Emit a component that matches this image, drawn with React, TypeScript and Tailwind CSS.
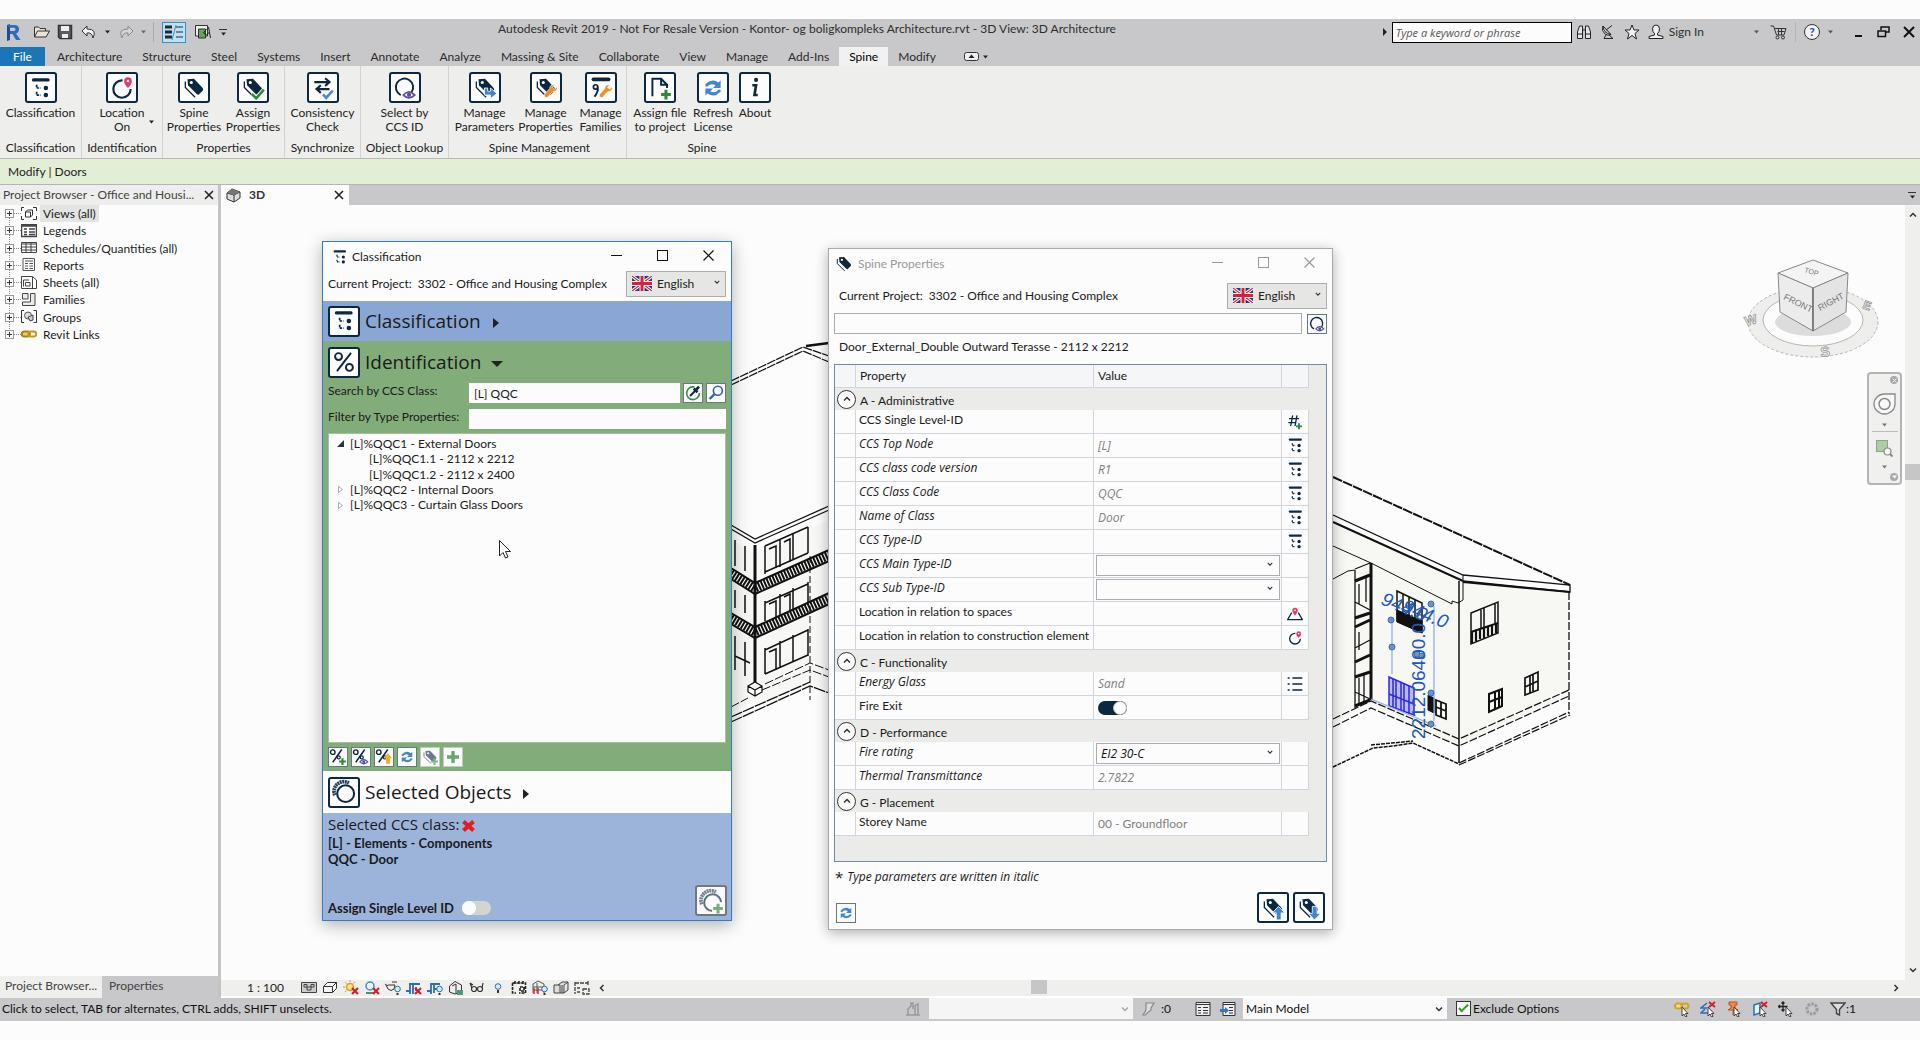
import type { ReactNode } from "react";

const NAVY = "#0c2740";

/* ---------- shared icons ---------- */

function Svg({ w = 16, h = 16, box, children }: { w?: number; h?: number; box?: string; children: ReactNode }) {
  return (
    <svg width={w} height={h} viewBox={box ?? "0 0 16 16"} fill="none" className="block shrink-0" aria-hidden="true">
      {children}
    </svg>
  );
}

function Caret({ color = "#222" }: { color?: string }) {
  return (
    <Svg w={5} h={4} box="0 0 5 4">
      <path d="M0 0.5h5L2.5 3.5z" fill={color} />
    </Svg>
  );
}

function Chevron({ dir, size = 8 }: { dir: "up" | "down" | "left" | "right"; size?: number }) {
  const d = { up: "M1 5.5L4 2.5L7 5.5", down: "M1 2.5L4 5.5L7 2.5", left: "M5.5 1L2.5 4L5.5 7", right: "M2.5 1L5.5 4L2.5 7" }[dir];
  return (
    <Svg w={size} h={size} box="0 0 8 8">
      <path d={d} stroke="#333" strokeWidth="1.5" />
    </Svg>
  );
}

const Tree = () => (
  <>
    <path d="M5 4.500H18.500" stroke={NAVY} strokeWidth="3" strokeLinecap="round" />
    <path d="M8 9V12H11.500M8 15.500V18.500H11.500" stroke={NAVY} strokeWidth="1.600" strokeDasharray="2.200 0.800" />
    <circle cx="16.500" cy="12" r="2.100" fill={NAVY} />
    <circle cx="16.500" cy="18.500" r="2.100" fill={NAVY} />
  </>
);

const Tag = () => (
  <>
    <path d="M6 4L12 3.500L20 12Q21 13.500 20 14.500L16.500 18Q15.500 18.500 14.500 17.500L6.500 9.500Z" fill={NAVY} />
    <path d="M4 6V11.500L13 20.500" stroke={NAVY} strokeWidth="1.200" />
    <circle cx="9.500" cy="7" r="1.400" fill="#fff" />
  </>
);

const Pin = () => (
  <>
    <path d="M17.500 12C14.500 8.500 14 7.500 14 5.500A3.500 3.500 0 0 1 21 5.500C21 7.500 20.500 8.500 17.500 12Z" fill="#e8356d" />
    <circle cx="17.500" cy="5.500" r="1.200" fill="#fff" />
  </>
);

const Eye = () => (
  <>
    <path d="M10.500 18.500Q15.500 12.500 21 18.500Q15.500 23.500 10.500 18.500Z" fill="#fff" stroke="#5a4fa0" strokeWidth="1.600" />
    <circle cx="15.700" cy="18.300" r="2" fill="#5a4fa0" />
  </>
);

const Wrench = () => (
  <path d="M22.500 10.500L20 13L18 11.500L20 9Q15.500 8.500 15.500 12.500L10.500 18Q10 21 13 21L18 15.500Q23 15.500 22.500 10.500Z" fill="#f08a24" stroke="#fcfcfc" strokeWidth="0.700" />
);

const Sync = () => (
  <>
    <path d="M5 8.500Q11 2.500 17 7L19 5V12H12L14.500 9.500Q10 7 7 10.500H5Z" fill="#3f86cc" />
    <path d="M19 15.500Q13 21.500 7 17L5 19V12.500H12L9.500 15Q14 17.500 17 13.500H19Z" fill="#3f86cc" />
  </>
);

const Green = ({ x = 17, y = 17 }: { x?: number; y?: number }) => (
  <path d={`M${x - 4.5} ${y}h9M${x} ${y - 4.5}v9`} stroke="#2f8a3a" strokeWidth="2.800" />
);

const Ring = () => (
  <>
    <path d="M3.500 15A9 9 0 0 1 16.500 3.800" stroke="#2b4256" strokeWidth="3.400" strokeDasharray="1.800 0.500" />
    <circle cx="13.500" cy="13.500" r="7.800" fill="#fcfcfc" stroke={NAVY} strokeWidth="1.900" />
  </>
);

const Percent = ({ small = false }: { small?: boolean }) =>
  small ? (
    <>
      <circle cx="5" cy="5.500" r="3" stroke={NAVY} strokeWidth="1.900" />
      <path d="M17 2L5 19" stroke={NAVY} strokeWidth="2" />
      <circle cx="13" cy="12.500" r="2" stroke={NAVY} strokeWidth="1.600" />
    </>
  ) : (
    <>
      <circle cx="7" cy="7" r="3.200" stroke={NAVY} strokeWidth="1.800" />
      <circle cx="17" cy="17" r="3.200" stroke={NAVY} strokeWidth="1.800" />
      <path d="M18.500 3.500L5.500 20.500" stroke={NAVY} strokeWidth="1.800" />
    </>
  );

const glyphs: Record<string, ReactNode> = {
  tree: <Tree />,
  location: (
    <>
      <path d="M12.500 5A8 8 0 1 0 20 13" stroke={NAVY} strokeWidth="2" />
      <Pin />
    </>
  ),
  tag: <Tag />,
  tagCheck: (
    <>
      <Tag />
      <path d="M11 17.500L15 21.500L22 13.500" stroke="#fff" strokeWidth="4" />
      <path d="M11 17.500L15 21.500L22 13.500" stroke="#2f8a3a" strokeWidth="2.400" />
    </>
  ),
  swap: (
    <>
      <path d="M4 6.500H17M14 3L18 6.500L14 10" stroke={NAVY} strokeWidth="2" />
      <path d="M18 13H6M10 9.500L6 13L10 16.500" stroke={NAVY} strokeWidth="2" />
      <path d="M12 18L15 21L21 14.500" stroke="#4a8ad0" strokeWidth="2.400" />
    </>
  ),
  select: (
    <>
      <path d="M8 18.500A8 8 0 1 1 18 16" stroke={NAVY} strokeWidth="1.800" />
      <Eye />
    </>
  ),
  tagArrow: (
    <>
      <Tag />
      <path d="M11.500 12V18.500H17V22L23 17L17 12V15H14.500V12Z" fill="#3f86cc" stroke="#fff" strokeWidth="0.800" />
    </>
  ),
  tagWrench: (
    <>
      <Tag />
      <Wrench />
    </>
  ),
  family: (
    <>
      <path d="M5 4H19" stroke={NAVY} strokeWidth="3.400" strokeLinecap="round" />
      <circle cx="7" cy="11" r="2" stroke={NAVY} strokeWidth="1.600" />
      <path d="M9 11.500Q9.500 16 6 20" stroke={NAVY} strokeWidth="1.800" />
      <Wrench />
    </>
  ),
  file: (
    <>
      <path d="M5 19.500V3.500H13L18.500 9V12M13 3.500V9H18.500" stroke={NAVY} strokeWidth="1.800" />
      <Green x={17.5} y={18} />
    </>
  ),
  sync: <Sync />,
  info: (
    <>
      <circle cx="13" cy="4.500" r="1.900" fill={NAVY} />
      <path d="M9.500 9.500H13L11.500 18.500H14.500" stroke={NAVY} strokeWidth="2.400" />
    </>
  ),
  percent: <Percent />,
  percentAdd: (
    <>
      <Percent small />
      <Green x={18} y={18} />
    </>
  ),
  percentEye: (
    <>
      <Percent small />
      <Eye />
    </>
  ),
  percentUp: (
    <>
      <Percent small />
      <path d="M17 7L23 13.500H20V21H14.500V13.500H11.500Z" fill="#f0b323" />
    </>
  ),
  tagAdd: (
    <g opacity="0.600">
      <Tag />
      <Green x={18} y={18} />
    </g>
  ),
  plus: <path d="M12 4V20M4 12H20" stroke="#6aa56e" strokeWidth="4.500" />,
  ring: <Ring />,
  ringAdd: (
    <g opacity="0.650">
      <Ring />
      <path d="M13 13H24V24H13Z" fill="#fcfcfc" />
      <Green x={18.5} y={19} />
    </g>
  ),
  dropper: (
    <>
      <path d="M14 4A8.500 8.500 0 1 0 20.500 12" stroke="#3c8a46" strokeWidth="2.200" />
      <path d="M8 16L15 9" stroke={NAVY} strokeWidth="2.500" />
      <path d="M13 6L18 11M15 9L20 3.500" stroke={NAVY} strokeWidth="3.500" />
    </>
  ),
  lens: (
    <>
      <circle cx="14.500" cy="9" r="6" stroke="#3a62a8" strokeWidth="2.200" />
      <path d="M10 13.500L3.500 20" stroke="#3a62a8" strokeWidth="3.200" />
    </>
  ),
  hashAdd: (
    <>
      <path d="M8.500 2L5.500 18M15 2L12 18M3 7H18M2 13H14" stroke={NAVY} strokeWidth="2" />
      <Green x={18} y={18.5} />
    </>
  ),
  spaces: (
    <>
      <path d="M7 10L1 20.500H23L17 10" stroke={NAVY} strokeWidth="1.800" />
      <path d="M12 14.500C9 10.500 8 9 8 6.500A4 4 0 0 1 16 6.500C16 9 15 10.500 12 14.500Z" fill="#e8356d" />
      <circle cx="12" cy="6.500" r="1.400" fill="#fff" />
    </>
  ),
  list: (
    <>
      <path d="M8 3H23M8 12H23M8 21H23" stroke={NAVY} strokeWidth="2.600" />
      <path d="M1 3H4M1 12H4M1 21H4" stroke={NAVY} strokeWidth="2.600" />
    </>
  ),
  tagUp: (
    <>
      <Tag />
      <path d="M17 10.500L23 16.500H19.500V23H15V16.500H11.500Z" fill="#3f86cc" stroke="#fff" strokeWidth="0.800" />
    </>
  ),
  tagDown: (
    <>
      <Tag />
      <path d="M17 23L23 17H19.500V10.500H15V17H11.500Z" fill="#3f86cc" stroke="#fff" strokeWidth="0.800" />
    </>
  ),
};

function Glyph({ name, size }: { name: string; size: number }) {
  return (
    <Svg w={size} h={size} box="0 0 24 24">
      {glyphs[name]}
    </Svg>
  );
}

function Framed({ name, dim = false }: { name: string; dim?: boolean }) {
  return (
    <span
      className={
        "flex h-[31px] w-8 shrink-0 items-center justify-center rounded-[3px] border-2 bg-[#fcfcfc] " +
        (dim ? "border-[#6d7880]" : "border-[#0c2740]")
      }
    >
      <Glyph name={name} size={26} />
    </span>
  );
}

/* ---------- title bar ---------- */

function TitleBar() {
  const btn = "flex h-5 items-center justify-center";
  return (
    <header className="relative flex h-7 items-start bg-[#c8c8ca] pt-0.5 text-[#2e2e2e]">
      <div className="flex h-[22px] items-center">
        <span className="ml-1.5">
          <Svg w={15} h={17} box="0 0 15 17">
            <path d="M1 1L4 0V16L1 17Z" fill="#1b4f91" />
            <path d="M1 1H8.500Q13 1 13 5.200Q13 8.500 10 9.500L14.500 16H10L6.500 10H4V7H8Q9.500 7 9.500 5.200Q9.500 3.800 8 3.800H4Z" fill="#2d6db5" />
          </Svg>
        </span>
        <button aria-label="Open" className={btn + " ml-3"}>
          <Svg w={17}>
            <path d="M1 13V3H5L6.500 4.500H12V7M1 13L4 7H16L12.500 13Z" stroke="#333" fill="#e9e4d4" />
          </Svg>
        </button>
        <button aria-label="Save" className={btn + " ml-[7px]"}>
          <Svg>
            <path d="M1.500 1.500H14.500V14.500H3L1.500 13Z" stroke="#333" strokeWidth="1.500" fill="#5b5b66" />
            <path d="M4 2H12V7H4ZM5 10H11V14H5Z" fill="#eee" />
          </Svg>
        </button>
        <button aria-label="Undo" className={btn + " ml-2"}>
          <Svg>
            <path d="M6 2L1 7L6 12V9Q11 8 12 14Q16.500 5 6 5Z" stroke="#333" fill="#f4f4f4" />
          </Svg>
        </button>
        <span className="ml-2"><Caret /></span>
        <button aria-label="Redo" className={btn + " ml-2"}>
          <Svg>
            <path d="M10 2L15 7L10 12V9Q5 8 4 14Q-0.500 5 10 5Z" stroke="#8a8a8a" fill="#d4d4d4" />
          </Svg>
        </button>
        <span className="ml-[7px]"><Caret color="#666" /></span>
        <span className="ml-[7px] h-5 w-px bg-[#aaaaac]" />
        <button aria-label="Thin lines" className="ml-2 flex h-[21px] w-6 items-center justify-center border border-[#3a8fc8] bg-[#bfe0f2]">
          <Svg w={18} h={15} box="0 0 18 15">
            <path d="M0 2H7M0 7H7M0 12H7" stroke="#1b2a38" strokeWidth="3" />
            <path d="M11 2H18M11 7H18M11 12H18" stroke="#1b2a38" />
            <path d="M11 0L7 15" stroke="#3a8fc8" />
          </Svg>
        </button>
        <button aria-label="Close hidden windows" className={btn + " ml-2"}>
          <Svg w={17}>
            <path d="M1 1.500H13V12H1Z" stroke="#333" fill="#eee" />
            <path d="M4 5H11V14H4Z" fill="#5fa854" stroke="#333" />
            <path d="M12 5L9 9L12 11L15 8M14 3L16 14" stroke="#222" />
          </Svg>
        </button>
        <span className="ml-2 flex flex-col items-center gap-0.5">
          <span className="h-px w-2 bg-[#333]" />
          <Caret />
        </span>
      </div>
      <h1 className="absolute left-[498px] top-[2px] whitespace-nowrap text-[12px] leading-4">
        Autodesk Revit 2019 - Not For Resale Version - Kontor- og boligkompleks Architecture.rvt - 3D View: 3D Architecture
      </h1>
      <div className="ml-auto flex h-[22px] items-center pr-[5px]">
        <Svg w={4} h={8} box="0 0 4 8">
          <path d="M0 0L4 4L0 8Z" fill="#222" />
        </Svg>
        <input
          aria-label="Search help"
          placeholder="Type a keyword or phrase"
          className="ml-[5px] h-[21px] w-[180px] border border-black bg-[#fcfcfc] px-[3px] font-['Open_Sans'] text-[11px] italic outline-none placeholder:text-[#555]"
        />
        <button aria-label="Search" className={btn + " ml-1"}>
          <Svg>
            <path d="M1.500 14.500V8L3.500 2H6.500V14.500ZM9.500 14.500V2H12.500L14.500 8V14.500ZM1.500 10H6.500M9.500 10H14.500M6.500 6H9.500" stroke="#222" fill="#e5e5e5" />
          </Svg>
        </button>
        <button aria-label="Communication centre" className={btn + " ml-2"}>
          <Svg>
            <path d="M3 2Q3 9 11 10.500Q8 12 5 10Q1 7 3 2Z" stroke="#222" fill="#eee" />
            <path d="M3 2L11 10.500M6 6L12 1.500M6 11L4 14.500H13L9 11" stroke="#222" />
          </Svg>
        </button>
        <button aria-label="Favourites" className={btn + " ml-2"}>
          <Svg>
            <path d="M8 1L10 6H15L11 9.500L12.500 15L8 11.500L3.500 15L5 9.500L1 6H6Z" stroke="#222" fill="#f0f0f0" />
          </Svg>
        </button>
        <button className={btn + " ml-2 gap-[5px] text-[12px]"}>
          <Svg>
            <path d="M8 1Q11.500 1 11.500 5Q11.500 8 9.500 9.500V11L15 12.500V14.500H1V12.500L6.500 11V9.500Q4.500 8 4.500 5Q4.500 1 8 1Z" stroke="#222" fill="#eee" />
          </Svg>
          Sign In
        </button>
        <span className="ml-[50px]"><Caret color="#555" /></span>
        <button aria-label="App store" className={btn + " ml-[11px]"}>
          <Svg w={17}>
            <path d="M0 2H3L6 11H13.500L15.500 4.500H4M7 7.500H14M8 5V11M11 5V11" stroke="#333" />
            <circle cx="7" cy="13.500" r="1.500" stroke="#333" />
            <circle cx="12.500" cy="13.500" r="1.500" stroke="#333" />
          </Svg>
        </button>
        <span className="ml-2 h-5 w-px bg-[#b4b4b6]" />
        <button aria-label="Help" className="ml-2 flex h-4 w-4 items-center justify-center rounded-full border border-[#333] bg-[#f2f2f2] text-[12px] font-bold leading-none text-[#1d4d9b]">
          ?
        </button>
        <span className="ml-2"><Caret color="#555" /></span>
        <button aria-label="Minimize" className={btn + " ml-[21px]"}>
          <Svg w={10} h={12} box="0 0 10 12"><path d="M1 10H8" stroke="#111" strokeWidth="2" /></Svg>
        </button>
        <button aria-label="Restore" className={btn + " ml-[13px]"}>
          <Svg w={13} h={12} box="0 0 13 12"><path d="M4 4V1H12V6H9M1 5H8.500V10.500H1Z" stroke="#111" strokeWidth="1.500" /></Svg>
        </button>
        <button aria-label="Close" className={btn + " ml-[13px]"}>
          <Svg w={12} h={12} box="0 0 12 12"><path d="M1 1L11 11M11 1L1 11" stroke="#111" strokeWidth="2" /></Svg>
        </button>
      </div>
    </header>
  );
}

/* ---------- ribbon ---------- */

const tabs = ["Architecture", "Structure", "Steel", "Systems", "Insert", "Annotate", "Analyze", "Massing & Site", "Collaborate", "View", "Manage", "Add-Ins", "Spine", "Modify"];

function RibbonTabs() {
  return (
    <nav className="flex h-[19px] items-stretch bg-[#c8c8ca] text-[12px] leading-[18px]">
      <button className="mr-0.5 w-[45px] bg-[#1b76b8] text-white">File</button>
      {tabs.map((t) => (
        <button key={t} className={"px-2.5 " + (t === "Spine" ? "bg-[#f1f1f1] text-black" : "text-[#2b2b2b]")}>
          {t}
        </button>
      ))}
      <button aria-label="Minimize ribbon" className="ml-[18px] flex items-center gap-1">
        <Svg w={15} h={9} box="0 0 15 9">
          <rect x="0.500" y="0.500" width="14" height="8" rx="2" stroke="#333" fill="#eee" />
          <path d="M4.500 6L7.500 2.500L10.500 6Z" fill="#222" />
        </Svg>
        <Caret />
      </button>
    </nav>
  );
}

type Tool = { icon: string; a: string; b?: string; w: string; caret?: boolean };
const panels: { title: string; w: string; tools: Tool[] }[] = [
  { title: "Classification", w: "w-[82px]", tools: [{ icon: "tree", a: "Classification", w: "w-20" }] },
  { title: "Identification", w: "w-[81px]", tools: [{ icon: "location", a: "Location", b: "On", w: "w-[76px]", caret: true }] },
  { title: "Properties", w: "w-[122px]", tools: [{ icon: "tag", a: "Spine", b: "Properties", w: "w-[59px]" }, { icon: "tagCheck", a: "Assign", b: "Properties", w: "w-[59px]" }] },
  { title: "Synchronize", w: "w-[76px]", tools: [{ icon: "swap", a: "Consistency", b: "Check", w: "w-[72px]" }] },
  { title: "Object Lookup", w: "w-[88px]", tools: [{ icon: "select", a: "Select by", b: "CCS ID", w: "w-20" }] },
  {
    title: "Spine Management",
    w: "w-[178px] pl-1",
    tools: [
      { icon: "tagArrow", a: "Manage", b: "Parameters", w: "w-[62px]" },
      { icon: "tagWrench", a: "Manage", b: "Properties", w: "w-[60px]" },
      { icon: "family", a: "Manage", b: "Families", w: "w-[50px]" },
    ],
  },
  {
    title: "Spine",
    w: "w-[150px]",
    tools: [
      { icon: "file", a: "Assign file", b: "to project", w: "w-[62px]" },
      { icon: "sync", a: "Refresh", b: "License", w: "w-11" },
      { icon: "info", a: "About", w: "w-10" },
    ],
  },
];

function Ribbon() {
  return (
    <div className="flex h-[93px] border-b border-[#b9b9bb] bg-[#eeeeec] text-[12px] leading-[14px] text-[#222]">
      {panels.map((p, i) => (
        <section key={p.title} className={"flex shrink-0 flex-col items-center " + p.w + (i < 6 ? " border-r border-[#d2d2d4]" : "")}>
          <div className="flex h-[75px] justify-center pt-1.5">
            {p.tools.map((t) => (
              <button key={t.icon} className={"relative flex shrink-0 flex-col items-center " + t.w}>
                <Framed name={t.icon} />
                <span className="mt-[3px] whitespace-nowrap">{t.a}</span>
                {t.b && <span className="whitespace-nowrap">{t.b}</span>}
                {t.caret && (
                  <span className="absolute right-1.5 top-[48px]"><Caret /></span>
                )}
              </button>
            ))}
          </div>
          <h2 className="whitespace-nowrap">{p.title}</h2>
        </section>
      ))}
    </div>
  );
}

/* ---------- project browser ---------- */

const browserItems: { name: string; icon: ReactNode }[] = [
  { name: "Views (all)", icon: <path d="M3 0.500H0.500V4M12 0.500H15.500V4M3 12.500H0.500V9M12 12.500H15.500V9M4.500 5L6.500 3H11.500V8L9.500 10H4.500ZM4.500 5H9.500V10" stroke="#333" /> },
  { name: "Legends", icon: <path d="M0.500 0.500H15.500V12.500H0.500ZM1 2H15M3 5H6M3 8H6M3 10.500H6M8 5H14M8 8H14M8 10.500H14" stroke="#444" strokeWidth="1.500" /> },
  { name: "Schedules/Quantities (all)", icon: <path d="M0.500 1.500H15.500V11.500H0.500ZM1 3H15M1 6H15M1 9H15M5 2V12M10 2V12" stroke="#444" /> },
  { name: "Reports", icon: <path d="M2 0.500H13.500V12.500H2ZM4 3H12M4 5.500H7M8.500 5.500H12M4 8H7M8.500 8H12M4 10.500H7M8.500 10.500H12" stroke="#555" /> },
  { name: "Sheets (all)", icon: <path d="M0.500 0.500H11.500L15.500 4V12.500H0.500ZM11.500 1V12M2.500 10.500V4H8M4.500 10V6.500H9V10Z" stroke="#444" /> },
  { name: "Families", icon: <path d="M1.500 0.500H7V6H1.500ZM9.500 0.500H14V12.500H1.500V9H9.500Z" stroke="#444" fill="#ececec" /> },
  { name: "Groups", icon: <><path d="M3 0.500H0.500V12.500H3M12.500 0.500H15.500V12.500H12.500" stroke="#333" /><circle cx="7" cy="5.500" r="3.500" stroke="#555" fill="#ddd" /><path d="M7 7L12 5V10L9 11Z" stroke="#444" fill="#ccc" /></> },
  { name: "Revit Links", icon: <><rect x="0.800" y="4.500" width="8" height="5" rx="2.500" stroke="#b07d10" strokeWidth="2" fill="#f5d35a" /><rect x="7.200" y="4.500" width="8" height="5" rx="2.500" stroke="#c9961c" strokeWidth="2" /></> },
];

function Cross({ size = 9, color = "#222", weight = 1.6 }: { size?: number; color?: string; weight?: number }) {
  return (
    <Svg w={size} h={size} box="0 0 10 10">
      <path d="M1 1L9 9M9 1L1 9" stroke={color} strokeWidth={weight} />
    </Svg>
  );
}

function ProjectBrowser() {
  return (
    <aside className="flex w-[221px] shrink-0 flex-col border-r-[3px] border-[#c4c4c4] bg-[#fcfcfc] text-[12px] text-[#1c1c1c]">
      <div className="flex h-5 items-center justify-between bg-[#eeeeec] pl-[3px] pr-1 text-[#444]">
        <h2 className="whitespace-nowrap">Project Browser - Office and Housi...</h2>
        <button aria-label="Close project browser"><Cross size={10} /></button>
      </div>
      <ul className="flex h-[138px] flex-col">
        {browserItems.map((it, i) => (
          <li key={it.name} className="relative flex flex-1 items-center pl-[5px]">
            {i < 7 && <span className="absolute left-[9px] top-3 h-3 border-l border-dotted border-[#888]" />}
            <button aria-label={"Expand " + it.name} className="flex h-[9px] w-[9px] items-center justify-center border border-[#999] bg-[#fafafa]">
              <Svg w={7} h={7} box="0 0 7 7"><path d="M1 3.500H6M3.500 1V6" stroke="#334" /></Svg>
            </button>
            <span className="w-[7px] border-t border-dotted border-[#888]" />
            <Svg h={14} box="0 0 16 14">{it.icon}</Svg>
            <span className={"ml-[3px] whitespace-nowrap px-[3px] leading-[17px] " + (i === 0 ? "bg-[#e4e4e2]" : "")}>{it.name}</span>
          </li>
        ))}
      </ul>
      <div className="mt-auto flex h-[22px] bg-[#c8c8ca] pb-0.5 text-[#444]">
        <button className="-mb-0.5 w-[102px] whitespace-nowrap bg-[#efefed] pb-0.5 pl-[5px] text-left">Project Browser...</button>
        <button className="pl-[7px] text-left">Properties</button>
      </div>
    </aside>
  );
}

/* ---------- model drawing ---------- */

function Building() {
  return (
    <svg viewBox="221 205 1684 775" preserveAspectRatio="xMinYMin slice" className="absolute inset-0 h-full w-full" fill="none" stroke="#111" aria-label="3D view of the building">
      {/* west wing */}
      <path d="M731 540L755 554V700L731 712ZM755 554L829 520V690L810 684L755 706Z" fill="#f7f7f5" stroke="none" />
      <path d="M731 381L803 347L829 356M731 385L803 351L829 362" strokeWidth="1.200" strokeDasharray="9 1" />
      <path d="M806 346L829 343" strokeWidth="2.500" />
      <path d="M731 525L755 539L829 506M731 529L755 543L829 510" strokeWidth="1.300" />
      <path d="M755 545V686" strokeWidth="3" />
      <path d="M731 573L755 588L829 555" strokeWidth="9" strokeDasharray="2 1.200" />
      <path d="M731 568L755 583L829 550M731 579L755 594L829 561" strokeWidth="2" />
      <path d="M731 618L755 632L829 598" strokeWidth="9" strokeDasharray="2 1.200" />
      <path d="M731 613L755 627L829 593M731 624L755 638L829 604" strokeWidth="2" />
      <path d="M765 546V574M780 540V567M793 534V560M808 527V553M765 546L808 527M765 572L808 553M769 549L776 546V568M784 542L790 539V562" strokeWidth="1.500" />
      <path d="M765 601V621M780 594V615M793 588V609M808 582V602M765 603L808 584M769 604L776 601V617M784 597L790 594V611" strokeWidth="1.500" />
      <path d="M765 648V674M780 641V668M793 635V662M808 629V656M765 650L808 630M765 674L808 655M769 652L776 649V670" strokeWidth="1.500" />
      <path d="M735 540V566M745 546V571M735 590V608M745 595V613M735 636V670M745 642V676M735 656L750 663" strokeWidth="1.500" />
      <path d="M810 556V700" strokeDasharray="7 3" />
      <path d="M748 686L755 682L762 686V692L755 696L748 692ZM748 686L755 690L762 686M755 690V696" strokeWidth="1.200" fill="#fff" />
      <path d="M765 684L810 663L829 670M731 707L748 698M762 690L810 670L829 677" strokeDasharray="9 2" />
      <path d="M731 722L810 686L829 693M731 717L810 682" strokeWidth="1.300" strokeDasharray="12 1" />

      <g transform="translate(-4 -2)">
        {/* east wing */}
        <path d="M1337 526L1463 583V748L1375 706L1337 724ZM1463 583L1573 594V697L1463 748Z" fill="#f7f7f4" stroke="none" />
        <path d="M1337 479L1574 587" strokeWidth="2" strokeDasharray="10 1" />
        <path d="M1337 517L1467 577L1574 587V594L1467 583" strokeWidth="1.300" />
        <path d="M1337 524L1467 583M1467 584L1574 594" strokeWidth="2" />
        <path d="M1337 548L1375 565L1456 606V603L1462 605L1467 602V577" />
        <path d="M1337 581L1352 573L1359 572" />
        <path d="M1463 583V765" strokeWidth="1.500" />
        <path d="M1573 594V716" strokeDasharray="8 2" strokeWidth="1.300" />
        <path d="M1337 721L1375 703L1463 741L1573 692M1337 729L1375 710L1463 748L1573 698M1463 765L1573 714M1463 767L1574 717" strokeDasharray="8 2" strokeWidth="1.200" />
        <path d="M1337 769L1377 750L1397 748L1417 745L1463 766M1375 747L1417 743" strokeDasharray="4 1" strokeWidth="1.500" />
        <path d="M1375 565V702" strokeWidth="3" />
        <path d="M1359 572V710M1359 571L1374 565M1363 586V606M1370 580V604M1359 604L1374 612M1363 634V652M1359 650L1374 642M1363 680V707M1368 677V704M1359 694L1374 701" strokeWidth="1.300" />
        <path d="M1359 583L1374 577M1359 620L1374 615M1359 629L1374 622M1359 664L1374 657M1359 679L1374 674M1359 708L1374 702" strokeWidth="3" />
        <path d="M1401 593L1426 605V634L1401 623ZM1407 596V614M1413 599V618M1419 602V620" strokeWidth="1.500" />
        <path d="M1401 612L1426 623V635L1401 624Z" fill="#111" />
        <path d="M1475 615L1502 604V635L1475 646ZM1485 612V630M1488 610V630M1499 606V625" strokeWidth="1.500" />
        <path d="M1475 634L1502 625M1476 634V645M1480 632V643M1484 631V641M1488 629V640M1492 628V638M1496 626V637M1500 625V635" strokeWidth="2.200" />
        <path d="M1493 696L1506 691V708L1493 714ZM1499 694V711M1503 693V709M1493 704L1506 699" strokeWidth="2" />
        <path d="M1529 680L1542 674V692L1529 697ZM1534 678V695M1537 677V693M1529 689L1542 683" strokeWidth="1.700" />
        <path d="M1432 697L1438 700V715L1432 712Z" fill="#111" />
        <path d="M1440 702L1450 706V721L1440 717ZM1445 704V719M1440 709L1450 713" strokeWidth="1.800" />

        {/* selected door and its dimensions */}
        <path d="M1393 679L1418 690V717L1393 708Z" fill="#b9b9f4" stroke="#2a2ae0" strokeWidth="1.500" />
        <path d="M1397 681V709M1400 682V710M1405 684V712M1408 686V714M1413 688V716M1393 696L1418 706" stroke="#2a2ae0" strokeWidth="1.500" />
        <path d="M1396 622V676M1438 608V723M1375 701L1440 728" stroke="#8fa9e6" strokeWidth="1.200" />
        <g fill="#6d93cc" stroke="#4469a8">
          <circle cx="1435" cy="606" r="3" />
          <circle cx="1395" cy="622" r="3" />
          <circle cx="1396" cy="649" r="3" />
          <circle cx="1421" cy="656" r="3" />
          <circle cx="1426" cy="658" r="3" />
          <circle cx="1435" cy="695" r="3" />
          <circle cx="1435" cy="726" r="3" />
        </g>
        <g fill="#2158b4" stroke="none" fontFamily="'Liberation Sans', Arial, sans-serif" fontSize="19">
          <text transform="translate(1384 606) rotate(22)" fontStyle="italic">944.0</text>
          <text transform="translate(1405 613) rotate(22)" fontStyle="italic">944.0</text>
          <text transform="translate(1429 741) rotate(-90)">2212.0</text>
          <text transform="translate(1429 683) rotate(-90)">6400.0</text>
        </g>
      </g>
    </svg>
  );
}

function ViewCube() {
  return (
    <svg width="138" height="104" viewBox="1741 256 138 104" fill="none" className="absolute right-[26px] top-[51px]" aria-label="View cube">
      <ellipse cx="1813" cy="322" rx="65" ry="35" fill="#eeeeec" stroke="#b5b5b5" strokeDasharray="3 2" />
      <ellipse cx="1813" cy="320" rx="50" ry="26" fill="#fcfcfc" stroke="#b5b5b5" />
      <ellipse cx="1813" cy="322" rx="38" ry="14" fill="#dcdcdc" />
      <path d="M1778 273L1813 260L1848 273L1813 288Z" fill="#f4f4f4" stroke="#888" />
      <path d="M1778 273L1813 288V331L1780 312Z" fill="#ececec" stroke="#888" />
      <path d="M1848 273L1813 288V331L1846 312Z" fill="#e4e4e4" stroke="#888" />
      <path d="M1813 288V331" stroke="#555" />
      <g fill="#777" fontFamily="'Liberation Sans', Arial, sans-serif">
        <text transform="translate(1783 299) rotate(26)" fontSize="9">FRONT</text>
        <text transform="translate(1820 311) rotate(-28)" fontSize="9">RIGHT</text>
        <text transform="translate(1804 272) rotate(16)" fontSize="7">TOP</text>
      </g>
      <g fill="#f4f4f4" stroke="#999" strokeWidth="0.800" fontFamily="'Liberation Sans', Arial, sans-serif" fontWeight="bold">
        <text transform="translate(1746 326) rotate(-15)" fontSize="13">W</text>
        <text transform="translate(1862 308) rotate(20)" fontSize="12">E</text>
        <text transform="translate(1821 357) rotate(-6)" fontSize="14">S</text>
      </g>
    </svg>
  );
}

function NavigationBar() {
  return (
    <div className="absolute right-[3px] top-[167px] flex h-[113px] w-[35px] flex-col items-center rounded-[4px] border-2 border-[#b4b4b6] bg-[#f0f0ee]">
      <button aria-label="Close navigation bar" className="mt-0.5 mr-0.5 flex h-2 w-2 items-center justify-center self-end rounded-full bg-[#a8a8aa]">
        <Cross size={5} color="#fff" />
      </button>
      <button aria-label="Steering wheel" className="mt-[9px]">
        <Svg w={23} h={22} box="0 0 23 22">
          <path d="M11.500 1H22V11A10.500 10 0 1 1 11.500 1Z" fill="#f8f8f8" stroke="#8a8a8c" strokeWidth="1.300" />
          <circle cx="11.500" cy="11" r="5.500" stroke="#8a8a8c" strokeWidth="1.500" />
        </Svg>
      </button>
      <span className="mt-2"><Caret color="#777" /></span>
      <span className="mt-1 h-px w-[26px] bg-[#bbb]" />
      <button aria-label="Zoom region" className="mt-2">
        <Svg w={17} h={17} box="0 0 17 17">
          <rect x="0.500" y="0.500" width="11" height="11" fill="#a9cfa0" stroke="#8aa486" />
          <circle cx="11.500" cy="11.500" r="3.500" fill="#f6f6f6" stroke="#888" strokeWidth="1.200" />
          <path d="M14 14L16.500 16.500" stroke="#888" strokeWidth="2" />
        </Svg>
      </button>
      <span className="mt-2"><Caret color="#777" /></span>
      <button aria-label="Navigation options" className="mr-0.5 mt-auto mb-0.5 flex h-2 w-2 items-center justify-center self-end rounded-full bg-[#a8a8aa]">
        <Caret color="#fff" />
      </button>
    </div>
  );
}

/* ---------- dialog parts ---------- */

function WindowControls({ color }: { color: string }) {
  const cls = "flex h-[27px] w-[46px] items-center justify-center";
  return (
    <div className="ml-auto flex self-start">
      <button aria-label="Minimize" className={cls}><Svg w={11} h={11} box="0 0 11 11"><path d="M0 5.500H11" stroke={color} /></Svg></button>
      <button aria-label="Maximize" className={cls}><Svg w={11} h={11} box="0 0 11 11"><rect x="0.500" y="0.500" width="10" height="10" stroke={color} /></Svg></button>
      <button aria-label="Close" className={cls}><Svg w={11} h={11} box="0 0 11 11"><path d="M0.500 0.500L10.500 10.500M10.500 0.500L0.500 10.500" stroke={color} strokeWidth="1.200" /></Svg></button>
    </div>
  );
}

function LanguageSelect({ id }: { id: string }) {
  return (
    <div className="relative h-[26px] w-[100px] shrink-0">
      <select id={id} aria-label="Language" className="h-full w-full appearance-none border border-[#adadad] bg-[#e6e6e4] pl-[30px] text-[12px] text-[#222] outline-none">
        <option>English</option>
      </select>
      <span className="pointer-events-none absolute left-1.5 top-[5px]">
        <Svg w={20} h={15} box="0 0 20 15">
          <rect width="20" height="15" fill="#24387c" />
          <path d="M0 0L20 15M20 0L0 15" stroke="#fff" strokeWidth="3.200" />
          <path d="M0 0L20 15M20 0L0 15" stroke="#d8203a" strokeWidth="1.200" />
          <path d="M10 0V15M0 7.500H20" stroke="#fff" strokeWidth="5" />
          <path d="M10 0V15M0 7.500H20" stroke="#d8203a" strokeWidth="3" />
        </Svg>
      </span>
      <span className="pointer-events-none absolute right-1.5 top-2"><Chevron dir="down" size={6} /></span>
    </div>
  );
}

function ToolButton({ icon, label, dim = false }: { icon: string; label: string; dim?: boolean }) {
  return (
    <button aria-label={label} className={"flex h-5 w-5 shrink-0 items-center justify-center border bg-[#fafafa] " + (dim ? "border-[#c2ccc0]" : "border-[#667a7e]")}>
      <Glyph name={icon} size={18} />
    </button>
  );
}

/* ---------- classification dialog ---------- */

function TreeRow({ text, level, open }: { text: string; level: number; open?: boolean }) {
  return (
    <li className={"flex flex-1 items-center whitespace-nowrap " + (level === 1 ? "pl-10" : "pl-2")}>
      {level === 0 && (
        <span className="w-[13px]">
          <Svg w={7} h={7} box="0 0 7 7">
            {open ? <path d="M7 0V7H0Z" fill="#333" /> : <path d="M1.500 0.500L5.500 3.500L1.500 6.500Z" stroke="#999" strokeWidth="0.800" />}
          </Svg>
        </span>
      )}
      {text}
    </li>
  );
}

const heading = "font-['Open_Sans'] text-[19px] leading-6";

function ClassificationDialog() {
  return (
    <section aria-label="Classification" className="absolute left-[101px] top-[36px] flex w-[410px] flex-col border border-[#2f7fc6] bg-[#fcfcfc] text-[12px] text-[#1a1a1a] shadow-[0_4px_16px_rgba(0,0,0,0.3)]">
      <div className="flex h-[29px] items-center pl-2">
        <Glyph name="tree" size={18} />
        <h2 className="ml-[3px]">Classification</h2>
        <WindowControls color="#111" />
      </div>
      <div className="flex h-[30px] items-center justify-between px-[5px] pb-1">
        <span className="whitespace-nowrap">Current Project:&nbsp; 3302 - Office and Housing Complex</span>
        <LanguageSelect id="lang-classification" />
      </div>

      <button className="flex h-10 items-center bg-[#8aa6d5] px-[5px]">
        <Framed name="tree" />
        <span className={"ml-[5px] " + heading}>Classification</span>
        <span className="ml-3 mt-1"><Svg w={6} h={10} box="0 0 6 10"><path d="M0 0L6 5L0 10Z" fill="#222" /></Svg></span>
      </button>

      <div className="bg-[#83ac7b] px-[5px]">
        <button className="flex h-[42px] items-center">
          <Framed name="percent" />
          <span className={"ml-[5px] " + heading}>Identification</span>
          <span className="ml-2.5 mt-1"><Svg w={12} h={6} box="0 0 12 6"><path d="M0 0H12L6 6Z" fill="#222" /></Svg></span>
        </button>
        <div className="flex h-5 items-center gap-[3px]">
          <label htmlFor="ccs-class" className="w-[138px] pb-[5px]">Search by CCS Class:</label>
          <input id="ccs-class" defaultValue="[L] QQC" className="h-5 min-w-0 flex-1 bg-[#fcfcfc] px-[5px] outline-none" />
          <ToolButton icon="dropper" label="Pick class" />
          <ToolButton icon="lens" label="Search class" />
        </div>
        <div className="mt-1.5 flex h-5 items-center gap-[3px]">
          <label htmlFor="type-filter" className="w-[138px] whitespace-nowrap pb-[5px]">Filter by Type Properties:</label>
          <input id="type-filter" className="h-5 min-w-0 flex-1 bg-[#fcfcfc] px-[5px] outline-none" />
        </div>
        <div className="mt-1 h-[310px] border border-[#a7c2a1] bg-[#fcfcfc] pt-0.5 leading-[14px]">
          <ul className="flex h-[77px] flex-col">
            <TreeRow level={0} open text="[L]%QQC1 - External Doors" />
            <TreeRow level={1} text="[L]%QQC1.1 - 2112 x 2212" />
            <TreeRow level={1} text="[L]%QQC1.2 - 2112 x 2400" />
            <TreeRow level={0} text="[L]%QQC2 - Internal Doors" />
            <TreeRow level={0} text="[L]%QQC3 - Curtain Glass Doors" />
          </ul>
        </div>
        <div className="flex h-[28px] items-center gap-[3px]">
          <ToolButton icon="percentAdd" label="Add ID" />
          <ToolButton icon="percentEye" label="Show ID" />
          <ToolButton icon="percentUp" label="Update ID" />
          <ToolButton icon="sync" label="Refresh" />
          <ToolButton icon="tagAdd" label="Add tag" dim />
          <ToolButton icon="plus" label="Add" dim />
        </div>
      </div>

      <button className="flex h-[42px] items-center px-[5px]">
        <Framed name="ring" />
        <span className={"ml-[5px] " + heading}>Selected Objects</span>
        <span className="ml-3 mt-1"><Svg w={6} h={10} box="0 0 6 10"><path d="M0 0L6 5L0 10Z" fill="#222" /></Svg></span>
      </button>

      <div className="flex h-[107px] flex-col bg-[#9db4da] pl-[5px] pr-1">
        <p className="flex h-[22px] items-center gap-[3px] font-['Open_Sans'] text-[15px]">
          Selected CCS class:
          <button aria-label="Clear class" className="mt-1">
            <Svg w={13} h={12} box="0 0 13 12"><path d="M1.500 1.500L11.500 10.500M11.500 1.500L1.500 10.500" stroke="#e02020" strokeWidth="4" /></Svg>
          </button>
        </p>
        <p className="text-[13px] font-bold leading-4">[L] - Elements - Components</p>
        <p className="text-[13px] font-bold leading-4">QQC - Door</p>
        <div className="mb-1 mt-auto flex items-end">
          <label htmlFor="single-level" className="text-[13px] font-bold leading-4">Assign Single Level ID</label>
          <input id="single-level" type="checkbox" role="switch" className="mb-px ml-2 h-[14px] w-[29px] appearance-none rounded-full bg-[#d4d4d2] before:block before:h-[14px] before:w-[14px] before:rounded-full before:bg-[#fcfcfc] before:content-['']" />
          <button aria-label="Assign to object" className="ml-auto"><Framed name="ringAdd" dim /></button>
        </div>
      </div>
    </section>
  );
}

/* ---------- spine properties dialog ---------- */

type Row = { name: string; italic?: boolean; value?: string; icon?: string; control?: "select" | "switch" };
const groups: { title: string; rows: Row[] }[] = [
  {
    title: "A - Administrative",
    rows: [
      { name: "CCS Single Level-ID", icon: "hashAdd" },
      { name: "CCS Top Node", italic: true, value: "[L]", icon: "tree" },
      { name: "CCS class code version", italic: true, value: "R1", icon: "tree" },
      { name: "CCS Class Code", italic: true, value: "QQC", icon: "tree" },
      { name: "Name of Class", italic: true, value: "Door", icon: "tree" },
      { name: "CCS Type-ID", italic: true, icon: "tree" },
      { name: "CCS Main Type-ID", italic: true, control: "select", value: "" },
      { name: "CCS Sub Type-ID", italic: true, control: "select", value: "" },
      { name: "Location in relation to spaces", icon: "spaces" },
      { name: "Location in relation to construction element", icon: "location" },
    ],
  },
  {
    title: "C - Functionality",
    rows: [
      { name: "Energy Glass", italic: true, value: "Sand", icon: "list" },
      { name: "Fire Exit", control: "switch" },
    ],
  },
  {
    title: "D - Performance",
    rows: [
      { name: "Fire rating", italic: true, control: "select", value: "EI2 30-C" },
      { name: "Thermal Transmittance", italic: true, value: "2.7822" },
    ],
  },
  { title: "G - Placement", rows: [{ name: "Storey Name", value: "00 - Groundfloor" }] },
];

const italicText = "font-['Open_Sans'] italic";

function ValueCell({ row }: { row: Row }) {
  if (row.control === "select")
    return (
      <span className="relative block">
        <select aria-label={row.name} className="mx-0.5 block h-[21px] w-[184px] appearance-none border border-[#abadb3] bg-[#fcfcfc] px-1 font-['Open_Sans'] text-[12px] italic text-[#111] outline-none">
          <option>{row.value}</option>
        </select>
        <span className="pointer-events-none absolute right-2 top-1.5"><Chevron dir="down" size={6} /></span>
      </span>
    );
  if (row.control === "switch")
    return (
      <input
        type="checkbox"
        role="switch"
        defaultChecked
        aria-label={row.name}
        className="ml-1 flex h-[14px] w-[29px] appearance-none justify-end rounded-full bg-[#0c2740] before:block before:h-[14px] before:w-[14px] before:rounded-full before:border before:border-[#b8b8b8] before:bg-[#fcfcfc] before:content-['']"
      />
    );
  return <span className={"block pl-1 leading-[21px] text-[#808080] " + (row.italic ? italicText : "")}>{row.value}</span>;
}

function PropertyTable() {
  const cell = "border-b border-r border-[#d4d4dc] p-0";
  return (
    <div className="mx-[5px] flex h-[498px] border border-[#7189a5] bg-[#ebebe9]">
      <table className="w-[474px] table-fixed border-separate border-spacing-0 self-start text-left">
        <colgroup>
          <col className="w-[21px]" />
          <col className="w-[238px]" />
          <col className="w-[188px]" />
          <col className="w-[27px]" />
        </colgroup>
        <thead>
          <tr className="h-[23px] bg-[#f5f6f7]">
            <th className={cell} />
            <th className={cell + " pl-[4px] font-normal"}>Property</th>
            <th className={cell + " pl-[4px] font-normal"}>Value</th>
            <th className={cell} />
          </tr>
        </thead>
        {groups.map((g) => (
          <tbody key={g.title}>
            <tr className="h-[22px]">
              <th colSpan={4} className="h-[22px] p-0 font-normal">
                <span className="flex items-center pl-0.5">
                  <button aria-label={"Collapse " + g.title} className="flex h-[19px] w-[19px] items-center justify-center rounded-full border border-[#333] bg-[#fcfcfc]">
                    <Chevron dir="up" />
                  </button>
                  <span className="ml-1 pt-[3px]">{g.title}</span>
                </span>
              </th>
            </tr>
            {g.rows.map((r) => (
              <tr key={r.name} className="h-6 bg-[#fcfcfc]">
                <td className={cell + " h-6"} />
                <td className={cell + " whitespace-nowrap pl-[3px] align-top leading-[19px] " + (r.italic ? italicText : "")}>{r.name}</td>
                <td className={cell + " align-middle"}><ValueCell row={r} /></td>
                <td className={cell}>
                  {r.icon && (
                    <button aria-label={"Edit " + r.name} className="mx-auto block"><Glyph name={r.icon} size={r.icon === "tree" ? 19 : 16} /></button>
                  )}
                </td>
              </tr>
            ))}
          </tbody>
        ))}
      </table>
    </div>
  );
}

function PropertiesDialog() {
  return (
    <section aria-label="Spine Properties" className="absolute left-[607px] top-[43px] flex h-[682px] w-[505px] flex-col border border-[#a8a8b4] bg-[#fcfcfc] text-[12px] text-[#1a1a1a] shadow-[0_3px_12px_rgba(0,0,0,0.3)]">
      <div className="flex h-[29px] items-center pl-[5px] text-[#999]">
        <Glyph name="tag" size={20} />
        <h2 className="ml-1">Spine Properties</h2>
        <WindowControls color="#999" />
      </div>
      <div className="mt-[5px] flex h-[26px] items-center justify-between pl-2.5 pr-[5px]">
        <span className="whitespace-nowrap">Current Project:&nbsp; 3302 - Office and Housing Complex</span>
        <LanguageSelect id="lang-spine" />
      </div>
      <div className="mt-1 flex items-center gap-[5px] px-[5px]">
        <input aria-label="Filter properties" className="h-[21px] min-w-0 flex-1 border border-[#abadb3] bg-[#fcfcfc] px-1 outline-none" />
        <ToolButton icon="select" label="Find object" />
      </div>
      <p className="h-[30px] pl-2.5 leading-[26px]">Door_External_Double Outward Terasse - 2112 x 2212</p>
      <PropertyTable />
      <p className="mt-[7px] flex items-center gap-1 pl-1.5 leading-4">
        <span className="font-['Open_Sans'] text-[15px]">*</span>
        <em className="font-['Open_Sans']">Type parameters are written in italic</em>
      </p>
      <div className="mt-auto mb-1.5 flex items-end pl-[7px] pr-[7px]">
        <ToolButton icon="sync" label="Refresh properties" />
        <div className="ml-auto flex gap-1">
          <button aria-label="Write properties"><Framed name="tagUp" /></button>
          <button aria-label="Read properties"><Framed name="tagDown" /></button>
        </div>
      </div>
    </section>
  );
}

/* ---------- view area ---------- */

const RedX = () => <path d="M9 8L15 14M15 8L9 14" stroke="#d0202a" strokeWidth="2.200" />;
const Bulb = () => <><circle cx="12.500" cy="9" r="2.800" fill="#d8ecf8" stroke="#2d6db5" /><path d="M11.500 13H13.500V15H11.500Z" fill="#333" /></>;
const viewTools: [string, ReactNode][] = [
  ["Detail level", <path key="a" d="M0.500 2.500H15.500V12.500H0.500ZM3 4.500H6V7H3ZM10 4.500H13V7H10ZM6 7H10V10H6Z" stroke="#444" fill="#ccc" />],
  ["Visual style", <path key="a" d="M1.500 6.500L5.500 2.500H14.500V8.500L10.500 12.500H1.500ZM1.500 6.500H10.500V12.500M10.500 6.500L14.500 2.500" stroke="#333" fill="#f4f4f4" />],
  ["Sun path", <><circle key="a" cx="7" cy="7" r="3.500" fill="#fbe38a" stroke="#e09a20" strokeWidth="1.500" /><path d="M7 0V2M0 7H2M2 2L3.500 3.500M12 2L10.500 3.500M2 12L3.500 10.500" stroke="#e09a20" /><RedX /></>],
  ["Shadows", <><circle key="a" cx="6" cy="6" r="4" fill="#eef5fb" stroke="#3c8fc0" strokeWidth="1.500" /><path d="M2 13H10" stroke="#777" strokeWidth="2" /><RedX /></>],
  ["Rendering", <><path key="a" d="M1 5L3 9Q6 12 9 9L10 5H3M0 4L3 6M7 2H12" stroke="#333" /><Bulb /></>],
  ["Crop view", <><path key="a" d="M4 14V4H14M0 11H4M7 4V14M10 7V11" stroke="#2d6db5" strokeWidth="1.800" /><RedX /></>],
  ["Crop region", <><path key="a" d="M4 14V4H13M0 11H4M7 4V13M7 9H10" stroke="#2d6db5" strokeWidth="1.800" /><Bulb /></>],
  ["Lock view", <><path key="a" d="M1.500 6L7 1.500L13.500 5V12L7 14L1.500 12ZM4 6L8 4V13" stroke="#333" fill="#eee" /><path d="M9 10H15V15H9Z" fill="#4b9a80" /></>],
  ["Temporary hide", <><path key="a" d="M1 3L3 8M1 3L4 5M14 3L13 8" stroke="#333" strokeWidth="1.200" /><circle cx="5" cy="9" r="2.500" stroke="#333" strokeWidth="1.200" /><circle cx="11" cy="9" r="2.500" stroke="#333" strokeWidth="1.200" /></>],
  ["Reveal hidden", <><circle key="a" cx="8" cy="6.500" r="2.800" fill="#d8ecf8" stroke="#2d6db5" /><path d="M7 10H9V13H7Z" fill="#333" /></>],
  ["View properties", <path key="a" d="M1.500 3H14.500V13H8M1.500 3V13H5M4 1V4M8 1V4M12 1V4M9 7H13V11H9Z" stroke="#222" strokeWidth="1.600" strokeDasharray="3 1" />],
  ["Analytical model", <><path key="a" d="M1 13V4L6 1L12 4V13M1 7H12M1 10H12M5 3V13" stroke="#555" /><path d="M2 14V8M6 14V8" stroke="#c33" strokeWidth="1.500" /><Bulb /></>],
  ["Displacement sets", <path key="a" d="M1 5H7V13H1ZM5 5L9 2H15V10L11 13H7M9 5V13M15 2L11 5V13" stroke="#444" fill="#ddd" />],
  ["Constraints", <path key="a" d="M1 2V14M1 3H14M14 1V5M9 9H15V14H9ZM3 8H6M3 12H6" stroke="#444" strokeDasharray="4 1" strokeWidth="1.300" />],
];

function ViewArea() {
  return (
    <main className="flex min-w-0 flex-1 flex-col">
      <div className="flex h-5 items-stretch bg-[#c8c8ca]">
        <div className="flex w-32 items-center bg-[#fcfcfc] pl-[5px] pr-[5px] text-[12px] font-bold text-[#333]">
          <Svg w={15} h={15} box="0 0 15 15">
            <path d="M1 5L6 1L14 4V10L8 14L1 11ZM1 5L8 7L14 4M8 7V14" stroke="#333" fill="#ddd" />
            <path d="M1 5L6 1L14 4L8 7Z" fill="#777" />
          </Svg>
          <span className="ml-2">3D</span>
          <button aria-label="Close view" className="ml-auto"><Cross size={10} /></button>
        </div>
        <button aria-label="View list" className="ml-auto mr-1 flex flex-col items-center justify-center gap-0.5">
          <span className="h-px w-2 bg-[#333]" />
          <Caret />
        </button>
      </div>
      <div className="flex min-h-0 flex-1">
        <div className="relative min-w-0 flex-1 overflow-hidden bg-[#fcfcfc]">
          <Building />
          <ViewCube />
          <NavigationBar />
          <PropertiesDialog />
          <ClassificationDialog />
          <svg width="12" height="19" viewBox="0 0 12 19" className="absolute left-[278px] top-[335px]" aria-hidden="true">
            <path d="M0.500 0.500V16L4 12.500L6.500 18L9 17L6.500 11.500H11.500Z" fill="#fff" stroke="#222" />
          </svg>
        </div>
        <div className="relative flex w-[15px] flex-col items-center justify-between bg-[#efefed] py-1.5">
          <Chevron dir="up" />
          <span className="absolute left-0 top-[259px] h-4 w-[15px] bg-[#c6c6c6]" />
          <Chevron dir="down" />
        </div>
      </div>
      <div className="flex h-[18px] items-center border-b-2 border-white bg-[#efefed] text-[12px] text-[#222]">
        <span className="w-20 whitespace-nowrap pl-[26px]">1 : 100</span>
        <div className="flex gap-[5px]">
          {viewTools.map(([label, icon]) => (
            <button key={label} aria-label={label}><Svg>{icon}</Svg></button>
          ))}
        </div>
        <span className="ml-2"><Chevron dir="left" /></span>
        <div className="relative ml-2 flex h-full flex-1 items-center justify-end pr-5">
          <span className="absolute left-[417px] top-0 h-[14px] w-4 bg-[#c6c6c6]" />
          <Chevron dir="right" />
        </div>
      </div>
    </main>
  );
}

/* ---------- status bar ---------- */

const Pointer = () => <path d="M8 6V15L10 13L11.500 16L13 15.300L11.500 12.500H14Z" fill="#fff" stroke="#333" strokeWidth="0.900" />;
const selectTools: [string, ReactNode][] = [
  ["Select links", <><rect key="a" x="1" y="2.500" width="7" height="5" rx="2.500" stroke="#d9a21c" strokeWidth="2" fill="#f8e08a" /><rect x="7.500" y="2.500" width="7" height="5" rx="2.500" stroke="#d9a21c" strokeWidth="2" /><Pointer /></>],
  ["Select underlay", <><path key="a" d="M7 2L1 7H7M5 8L1 12H8" stroke="#2d6db5" strokeWidth="1.500" /><path d="M9 1L15 6M15 1L9 6" stroke="#d0202a" strokeWidth="2" /><Pointer /></>],
  ["Select pinned", <><path key="a" d="M3 1H11V4H9V7L12 9H2L5 7V4H3ZM7 9V14" stroke="#b8501c" fill="#f0894a" /><Pointer /></>],
  ["Select by face", <><path key="a" d="M2 4L8 2V12L2 14Z" stroke="#2d6db5" strokeWidth="1.500" fill="#e6f1fa" /><path d="M9 1L15 6M15 1L9 6" stroke="#d0202a" strokeWidth="2" /><Pointer /></>],
  ["Drag on selection", <><path key="a" d="M5 1V10M0.500 5.500H9.500M3.500 2.500L5 1L6.500 2.500M3.500 8.500L5 10L6.500 8.500M2 4L0.500 5.500L2 7" stroke="#222" strokeWidth="1.300" /><Pointer /></>],
  ["Background processes", <circle key="a" cx="8" cy="8" r="5" stroke="#9a9a9a" strokeWidth="3" strokeDasharray="2.500 1.200" />],
];

const Funnel = ({ color }: { color: string }) => <Svg><path d="M1 2H15L9.500 8.500V14L6.500 12.500V8.500Z" stroke={color} strokeWidth="1.400" fill="#dcdcdc" /></Svg>;

function StatusSelect({ label, value, muted = false }: { label: string; value?: string; muted?: boolean }) {
  return (
    <div className="relative w-[204px]">
      <select aria-label={label} className={"h-[21px] w-full appearance-none bg-[#fafafa] px-[3px] outline-none " + (muted ? "opacity-90" : "")}>
        <option>{value ?? ""}</option>
      </select>
      <span className={"pointer-events-none absolute right-1 top-[7px] " + (muted ? "opacity-40" : "")}><Chevron dir="down" size={8} /></span>
    </div>
  );
}

function StatusBar() {
  return (
    <footer className="flex h-[23px] items-center bg-[#c8c8ca] pb-0.5 text-[12px] text-[#111]">
      <p className="w-[905px] pl-0.5">Click to select, TAB for alternates, CTRL adds, SHIFT unselects.</p>
      <Svg><path d="M3 14V8L6 5V2H8V8M10 14V5L13 3V14M1 14H15" stroke="#999" strokeWidth="1.500" /></Svg>
      <span className="ml-2"><StatusSelect label="Active workset" muted /></span>
      <span className="ml-2"><Svg><path d="M5 2H13L10 7V9L4 14H2L5 9Z" stroke="#888" fill="#ddd" strokeWidth="1.200" /></Svg></span>
      <span className="ml-1">:0</span>
      <button aria-label="Design options" className="ml-6"><Svg><path d="M1 1.500H15V14.500H1ZM1 3.500H15M3 6.500H6M3 9.500H6M3 12H6M8 6.500H13M8 9.500H13M8 12H13" stroke="#333" fill="#eee" /></Svg></button>
      <button aria-label="Add to set" className="ml-[9px]"><Svg><path d="M3 1.500H15V14.500H3ZM3 3.500H15M9 6.500H13M9 9.500H13M9 12H13" stroke="#333" fill="#eee" /><path d="M0 8H5V6L9 9.500L5 13V11H0Z" fill="#2d78c8" /></Svg></button>
      <span className="ml-[7px]"><StatusSelect label="Design option" value="Main Model" /></span>
      <label className="ml-[9px] flex items-center gap-0.5 whitespace-nowrap">
        <input type="checkbox" defaultChecked className="h-[15px] w-[15px] appearance-none border border-[#333] bg-[#f8f8f8] before:ml-1 before:block before:h-2.5 before:w-[5px] before:rotate-45 before:border-b-2 before:border-r-2 before:border-[#3a9a2a] before:content-['']" />
        Exclude Options
      </label>
      <div className="ml-auto flex items-center gap-2.5 pr-[64px]">
        {selectTools.map(([label, icon]) => (
          <button key={label} aria-label={label}><Svg>{icon}</Svg></button>
        ))}
        <button className="flex items-center" aria-label="Selection count">
          <Funnel color="#444" />:1
        </button>
      </div>
    </footer>
  );
}

export default function App() {
  return (
    <div className="flex min-h-screen flex-col bg-[#fcfcfc] pb-[19px] pt-[19px] font-['Lato','Open_Sans',sans-serif]">
      <TitleBar />
      <RibbonTabs />
      <Ribbon />
      <div className="flex h-[26px] items-center border-b border-[#b4b4b4] bg-[#e2efd6] pl-2 text-[12px] text-[#222]">Modify | Doors</div>
      <div className="flex min-h-0 flex-1">
        <ProjectBrowser />
        <ViewArea />
      </div>
      <StatusBar />
    </div>
  );
}
